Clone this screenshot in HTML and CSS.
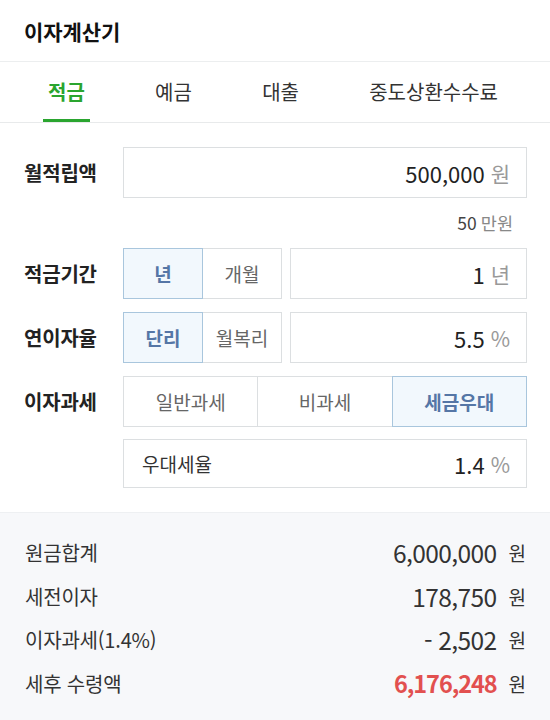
FILE: index.html
```html
<!DOCTYPE html>
<html lang="ko">
<head>
<meta charset="utf-8">
<title>이자계산기</title>
<link rel="stylesheet" href="styles.css">
</head>
<body>
<div class="page">
  <header class="header">
    <h1 class="title">이자계산기</h1>
  </header>
  <nav class="tabs">
    <span class="tab active">적금</span>
    <span class="tab">예금</span>
    <span class="tab">대출</span>
    <span class="tab">중도상환수수료</span>
  </nav>
  <section class="form">
    <div class="row">
      <div class="label">월적립액</div>
      <div class="field">
        <span class="num">500,000</span><span class="unit">원</span>
      </div>
    </div>
    <div class="hint"><span class="hint-num">50</span><span class="hint-unit">만원</span></div>
    <div class="row">
      <div class="label">적금기간</div>
      <div class="combo">
        <div class="seg">
          <span class="btn on">년</span>
          <span class="btn">개월</span>
        </div>
        <div class="field">
          <span class="num">1</span><span class="unit">년</span>
        </div>
      </div>
    </div>
    <div class="row gap">
      <div class="label">연이자율</div>
      <div class="combo">
        <div class="seg">
          <span class="btn on">단리</span>
          <span class="btn">월복리</span>
        </div>
        <div class="field">
          <span class="num">5.5</span><span class="unit">%</span>
        </div>
      </div>
    </div>
    <div class="row gap">
      <div class="label">이자과세</div>
      <div class="seg three">
        <span class="btn">일반과세</span>
        <span class="btn">비과세</span>
        <span class="btn on">세금우대</span>
      </div>
    </div>
    <div class="row gap2">
      <div class="label"></div>
      <div class="field sub">
        <span class="sub-label">우대세율</span>
        <span class="sub-val"><span class="num">1.4</span><span class="unit">%</span></span>
      </div>
    </div>
  </section>
  <section class="result">
    <div class="rrow">
      <span class="rlabel">원금합계</span>
      <span class="rval"><span class="rnum">6,000,000</span><span class="runit">원</span></span>
    </div>
    <div class="rrow">
      <span class="rlabel">세전이자</span>
      <span class="rval"><span class="rnum">178,750</span><span class="runit">원</span></span>
    </div>
    <div class="rrow">
      <span class="rlabel">이자과세(1.4%)</span>
      <span class="rval"><span class="rnum">- 2,502</span><span class="runit">원</span></span>
    </div>
    <div class="rrow">
      <span class="rlabel">세후 수령액</span>
      <span class="rval"><span class="rnum red">6,176,248</span><span class="runit">원</span></span>
    </div>
  </section>
</div>
</body>
</html>
```
FILE: styles.css
```css
* { box-sizing: border-box; }
html, body { margin: 0; padding: 0; }
body {
  font-family: "Noto Sans CJK KR", "Noto Sans", sans-serif;
  color: #222;
  background: #fff;
  width: 550px;
  height: 720px;
  overflow: hidden;
}
.page { display: flex; flex-direction: column; height: 720px; }

.header {
  height: 62px;
  border-bottom: 1px solid #eceeef;
  display: flex;
  align-items: center;
  padding-left: 24px;
}
.title {
  margin: 0;
  font-size: 21px;
  font-weight: 700;
  color: #111;
  letter-spacing: -0.1px;
}

.tabs {
  height: 61px;
  border-bottom: 1px solid #e8eaeb;
  display: flex;
  justify-content: space-between;
  padding: 0 47px 0 43px;
}
.tab {
  display: flex;
  align-items: center;
  padding: 0 5px 2px;
  font-size: 20px;
  color: #333;
}
.tab.active {
  color: #2aa52f;
  font-weight: 700;
  box-shadow: inset 0 -3px 0 #2aa52f;
}

.form {
  padding: 24px 23px 24px 24px;
}
.row {
  display: grid;
  grid-template-columns: 99px 1fr;
  align-items: center;
}
.row.gap { margin-top: 13px; }
.row.gap2 { margin-top: 12px; }
.label {
  font-size: 20px;
  font-weight: 700;
  color: #222;
  letter-spacing: -0.2px;
}
.field {
  height: 51px;
  border: 1px solid #dcdfe1;
  display: flex;
  align-items: center;
  justify-content: flex-end;
  padding: 0 16px 0 18px;
  background: #fff;
}
.num {
  font-size: 22px;
  color: #222;
}
.unit {
  font-size: 21px;
  color: #999;
  margin-left: 6px;
}
.hint {
  height: 50px;
  display: flex;
  align-items: center;
  justify-content: flex-end;
  padding-right: 14px;
  padding-bottom: 2px;
}
.hint-num { font-size: 17.5px; color: #444; }
.hint-unit { font-size: 17.5px; color: #888; margin-left: 4px; }

.combo {
  display: grid;
  grid-template-columns: 159px 1fr;
  gap: 8px;
}
.seg {
  display: flex;
  height: 51px;
}
.btn {
  flex: 1;
  display: flex;
  align-items: center;
  justify-content: center;
  border: 1px solid #dcdfe1;
  font-size: 19px;
  color: #666;
  background: #fff;
}
.btn + .btn { margin-left: -1px; }
.btn.on {
  background: #f2f8fd;
  border-color: #a9c6dd;
  color: #5576a6;
  font-weight: 700;
  position: relative;
}
.field.sub {
  height: 49px;
  justify-content: space-between;
}
.sub-label { font-size: 19px; color: #333; }
.sub-val { display: flex; align-items: center; }

.result {
  flex: 1;
  background: #f7f8fa;
  border-top: 1px solid #eef0f2;
  padding: 18px 24px 0 25px;
}
.rrow {
  height: 43.5px;
  display: flex;
  align-items: center;
  justify-content: space-between;
}
.rlabel {
  font-size: 20px;
  color: #333;
  letter-spacing: -0.2px;
}
.rval { display: flex; align-items: center; }
.rnum {
  font-size: 24.5px;
  color: #333;
  font-weight: 400;
  letter-spacing: -0.6px;
}
.rnum.red { color: #e2504f; font-weight: 700; font-size: 23.5px; letter-spacing: -1.1px; }
.runit {
  font-size: 19px;
  color: #333;
  margin-left: 12px;
}
```
